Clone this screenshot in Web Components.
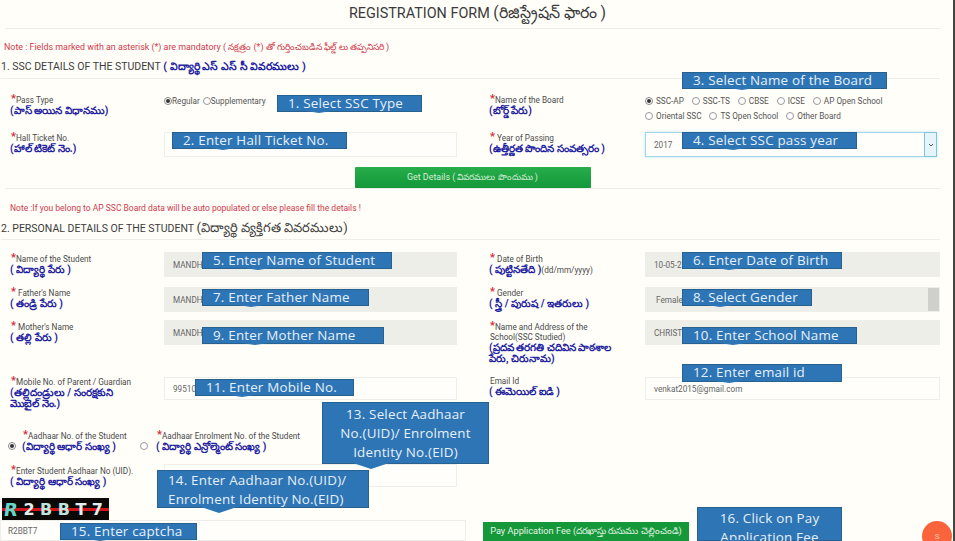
<!DOCTYPE html>
<html>
<head>
<meta charset="utf-8">
<title>Registration Form</title>
<style>
  html, body { margin: 0; padding: 0; height: 541px; overflow: hidden; background: #fffef9; }
  body { font-family: "Roboto", "Liberation Sans", sans-serif; }
</style>
</head>
<body>
<reg-page>
  <form-title>REGISTRATION FORM <span>(రిజిస్ట్రేషన్ ఫారం )</span></form-title>
  <red-note style="--top:11px;--fs:8.9px">Note : Fields marked with an asterisk (*) are mandatory <span>( నక్షత్రం (*) తో గుర్తించబడిన ఫీల్డ్ లు తప్పనిసరి )</span></red-note>
  <section-head style="--top:5px;--fs:10.5px;--tfs:10.8px">1. SSC DETAILS OF THE STUDENT <b>( విద్యార్థి ఎస్ ఎస్ సీ వివరములు )</b></section-head>

  <form-row style="--h:40px;--pt:13px;--lt:3px">
    <form-label req en="Pass Type" te="(పాస్ అయిన విధానము)"></form-label>
    <radio-group style="--gap:3px;--mt:4px">
      <radio-opt checked>Regular</radio-opt><radio-opt>Supplementary</radio-opt>
    </radio-group>
    <form-label req en="Name of the Board" te="(బోర్డ్ పేరు)"></form-label>
    <radio-group style="--gap:8px;--mt:4px;--in:3px">
      <radio-opt checked>SSC-AP</radio-opt><radio-opt>SSC-TS</radio-opt><radio-opt>CBSE</radio-opt><radio-opt>ICSE</radio-opt><radio-opt>AP Open School</radio-opt>
      <radio-opt>Oriental SSC</radio-opt><radio-opt>TS Open School</radio-opt><radio-opt>Other Board</radio-opt>
    </radio-group>
  </form-row>

  <form-row style="--h:34px;--pt:0px;--lt:1px">
    <form-label req en="Hall Ticket No." te="(హాల్ టికెట్ నెం.)"></form-label>
    <text-box></text-box>
    <form-label req en="&nbsp;Year of Passing" te="(ఉత్తీర్ణత పొందిన సంవత్సరం )"></form-label>
    <text-box focus arrow value="2017" style="margin-right:3px"></text-box>
  </form-row>

  <action-row>
    <green-btn style="--w:236px">Get Details ( వివరములు పొందుము )</green-btn>
  </action-row>

  <red-note style="--top:12px;--left:10px;--fs:8.5px">Note :If you belong to AP SSC Board data will be auto populated or else please fill the details !</red-note>
  <section-head style="--top:5px;--fs:10.5px;--tfs:13px">2. PERSONAL DETAILS OF THE STUDENT <b class="plain">(విద్యార్థి వ్యక్తిగత వివరములు)</b></section-head>

  <form-row style="--h:35px;--pt:12px;--lt:2px">
    <form-label req en="Name of the Student" te="( విద్యార్థి పేరు )"></form-label>
    <text-box grey value="MANDH"></text-box>
    <form-label req en="&nbsp;Date of Birth" te="( పుట్టినతేది )<em>(dd/mm/yyyy)</em>"></form-label>
    <text-box grey value="10-05-2"></text-box>
  </form-row>
  <form-row style="--h:33px;--pt:0px;--lt:1px">
    <form-label req en="&nbsp;Father's Name" te="( తండ్రి పేరు )"></form-label>
    <text-box grey value="MANDH"></text-box>
    <form-label req en="&nbsp;Gender" te="( స్త్రీ / పురుష / ఇతరులు )"></form-label>
    <text-box grey disabled-arrow value="&nbsp;Female"></text-box>
  </form-row>
  <form-row style="--h:57px;--pt:0px;--lt:2px">
    <form-label req en="&nbsp;Mother's Name" te="( తల్లి పేరు )"></form-label>
    <text-box grey value="MANDH"></text-box>
    <form-label req en="Name and Address of the<br>School(SSC Studied)" te="(ప్రదవ తరగతి చదివిన పాఠశాల<br>పేరు, చిరునామ)"></form-label>
    <text-box grey value="CHRIST"></text-box>
  </form-row>
  <form-row style="--h:50px;--pt:0px;--lt:0px;--bh:23px">
    <form-label req en="Mobile No. of Parent / Guardian" te="(తల్లిదండ్రులు / సంరక్షకుని<br>మొబైల్ నెం.)"></form-label>
    <text-box value="99510"></text-box>
    <form-label en="Email Id" te="( ఈమెయిల్ ఐడి )" style="margin-top:-1px"></form-label>
    <text-box value="venkat2015@gmail.com"></text-box>
  </form-row>

  <aadhaar-row>
    <radio-opt checked></radio-opt>
    <form-label req en="Aadhaar No. of the Student" te="(విద్యార్థి ఆధార్ సంఖ్య )"></form-label>
    <radio-opt></radio-opt>
    <form-label req en="Aadhaar Enrolment No. of the Student" te="( విద్యార్థి ఎన్రోల్మెంట్ సంఖ్య )"></form-label>
  </aadhaar-row>

  <form-row style="--h:34px;--pt:0px;--lt:2px;--bh:23px">
    <form-label req en="Enter Student Aadhaar No (UID)." te="( విద్యార్థి ఆధార్ సంఖ్య )"></form-label>
    <text-box></text-box>
  </form-row>

  <captcha-row value="R2BBT7" pay="Pay Application Fee (దరఖాస్తు రుసుము చెల్లించండి)"></captcha-row>

  <tag-layer>
    <call-out x="277" y="95" w="145" h="17">1. Select SSC Type</call-out>
    <call-out x="172" y="132" w="175" h="17">2. Enter Hall Ticket No.</call-out>
    <call-out x="682" y="72" w="205" h="17">3. Select Name of the Board</call-out>
    <call-out x="682" y="132" w="175" h="17">4. Select SSC pass year</call-out>
    <call-out x="202" y="252" w="190" h="17">5. Enter Name of Student</call-out>
    <call-out x="682" y="252" w="160" h="17">6. Enter Date of Birth</call-out>
    <call-out x="202" y="289" w="167" h="17">7. Enter Father Name</call-out>
    <call-out x="682" y="289" w="130" h="17">8. Select Gender</call-out>
    <call-out x="202" y="327" w="182" h="17">9. Enter Mother Name</call-out>
    <call-out x="682" y="327" w="175" h="17">10. Enter School Name</call-out>
    <call-out x="195" y="379" w="159" h="17">11. Enter Mobile No.</call-out>
    <call-out x="682" y="364" w="160" h="18">12. Enter email id</call-out>
    <call-out x="322" y="402" w="167" h="62" big center style="--pad:2px">13. Select Aadhaar<br>No.(UID)/ Enrolment<br>Identity No.(EID)</call-out>
    <call-out x="157" y="470" w="212" h="38" big>14. Enter Aadhaar No.(UID)/<br>Enrolment Identity No.(EID)</call-out>
    <call-out x="60" y="523" w="137" h="17">15. Enter captcha</call-out>
    <call-out x="697" y="507" w="145" h="34" big center style="--pad:1px">16. Click on Pay<br>Application Fee</call-out>
    <fab-dot>S</fab-dot>
  </tag-layer>
</reg-page>

<script>
const FONT = `"Roboto", "Liberation Sans", "Noto Sans", sans-serif`;

class RegPage extends HTMLElement {
  constructor() {
    super();
    this.attachShadow({ mode: 'open' }).innerHTML = `
      <style>
        :host { display: flex; flex-direction: column; position: relative; width: 955px; height: 541px;
          overflow: hidden; background: #fffef9; font-family: ${FONT}; box-sizing: border-box;
          border-right: 2px solid #444; }
      </style>
      <slot></slot>`;
  }
}

class FormTitle extends HTMLElement {
  constructor() {
    super();
    this.attachShadow({ mode: 'open' }).innerHTML = `
      <style>
        :host { display: block; height: 28px; line-height: 26px; margin: 0 13px 0 5px; padding-left: 10px; text-align: center;
          font-size: 14.4px; color: #3a3a3a; border-bottom: 1px solid #eeeee9; white-space: nowrap; }
        ::slotted(span) { font-size: 15.8px; }
      </style>
      <slot></slot>`;
  }
}

class RedNote extends HTMLElement {
  constructor() {
    super();
    this.attachShadow({ mode: 'open' }).innerHTML = `
      <style>
        :host { display: block; margin-top: var(--top, 10px); padding-left: var(--left, 4px); height: 14px; line-height: 14px;
          font-size: var(--fs, 8.6px); color: #cf3a4c; white-space: nowrap; }
        ::slotted(span) { font-size: 9px; }
      </style>
      <slot></slot>`;
  }
}

class SectionHead extends HTMLElement {
  constructor() {
    super();
    this.attachShadow({ mode: 'open' }).innerHTML = `
      <style>
        :host { display: block; margin: var(--top, 4px) 13px 0 1px; height: 15px; padding-bottom: 4px; line-height: 15px;
          font-size: var(--fs, 10.6px); color: #3c3c3c; border-bottom: 1px solid #eeeee9; white-space: nowrap; }
        ::slotted(b) { color: #1e22a0; font-weight: 700; font-size: var(--tfs, 11px); }
        ::slotted(b.plain) { color: #3c3c3c; font-weight: 400; }
      </style>
      <slot></slot>`;
  }
}

class FormRow extends HTMLElement {
  constructor() {
    super();
    this.attachShadow({ mode: 'open' }).innerHTML = `
      <style>
        :host { display: grid; grid-template-columns: 153px 293px 188px 295px; align-items: start;
          height: var(--h, 34px); padding: var(--pt, 0) 0 0 11px; }
        ::slotted(form-label:nth-child(3)) { padding-left: 33px; }
      </style>
      <slot></slot>`;
  }
}

class FormLabel extends HTMLElement {
  constructor() {
    super();
    const te = this.getAttribute('te') || '';
    const req = this.hasAttribute('req') ? '<i>*</i>' : '';
    this.attachShadow({ mode: 'open' }).innerHTML = `
      <style>
        :host { display: block; font-size: 8.2px; line-height: 10px; color: #4a4a4a; box-sizing: border-box;
          padding-top: var(--lt, 0px); }
        i { color: #d32a3a; font-style: normal; font-weight: 700; font-size: 11px; line-height: 5px; vertical-align: 1px; }
        b { display: block; color: #1e22a0; font-size: 10.3px; line-height: 11px; font-weight: 700; margin-left: -1px; white-space: nowrap; }
        em { font-style: normal; font-weight: 400; color: #4a4a4a; font-size: 8.2px; }
      </style>
      ${req}<span>${this.getAttribute('en')}</span><b>${te}</b>`;
  }
}

class TextBox extends HTMLElement {
  constructor() {
    super();
    const value = this.getAttribute('value') || '';
    const focus = this.hasAttribute('focus');
    const grey = this.hasAttribute('grey');
    const arrow = this.hasAttribute('arrow');
    const off = this.hasAttribute('disabled-arrow');
    this.attachShadow({ mode: 'open' }).innerHTML = `
      <style>
        :host { display: flex; align-items: center; height: var(--bh, 25px); box-sizing: border-box; padding-left: 8px;
          font-size: 8.2px; color: #666;
          background: ${grey ? '#eeeee9' : '#fffefb'};
          border: 1px solid ${focus ? '#9fd6ea' : '#efefea'};
          ${focus ? 'box-shadow: 0 0 3px #bfe6f3;' : ''} }
        span { flex: 1; }
        .arrow { width: 11px; align-self: stretch; display: flex; align-items: center; justify-content: center;
          border: 1px solid #7fc4dc; margin: -1px; background: #e4f4f9; }
        .off { width: 11px; align-self: stretch; background: #cfcfcb; }
      </style>
      <span>${value}</span>
      ${arrow ? `<div class="arrow"><svg width="6" height="4" viewBox="0 0 6 4"><path d="M1 1l2 2 2-2" fill="none" stroke="#555" stroke-width="1"/></svg></div>` : ''}
      ${off ? '<div class="off"></div>' : ''}`;
  }
}

class RadioGroup extends HTMLElement {
  constructor() {
    super();
    this.attachShadow({ mode: 'open' }).innerHTML = `
      <style>
        :host { display: flex; flex-wrap: wrap; align-items: center; gap: 5px var(--gap, 7px); font-size: 8.2px; color: #555;
          max-width: 245px; margin-top: var(--mt, 0); }
      </style>
      <slot></slot>`;
  }
}

class RadioOpt extends HTMLElement {
  constructor() {
    super();
    const on = this.hasAttribute('checked');
    this.attachShadow({ mode: 'open' }).innerHTML = `
      <style>
        :host { display: inline-flex; align-items: center; gap: var(--in, 0px); white-space: nowrap; line-height: 10px; }
        .c { width: 6px; height: 6px; border-radius: 50%; border: 1px solid #999; background: #fff; position: relative; flex: none; }
        .c.on { border-color: #888; }
        .c.on::after { content: ""; position: absolute; inset: 1px; border-radius: 50%; background: #333; }
      </style>
      <div class="c ${on ? 'on' : ''}"></div><slot></slot>`;
  }
}

class ActionRow extends HTMLElement {
  constructor() {
    super();
    this.attachShadow({ mode: 'open' }).innerHTML = `
      <style>
        :host { display: flex; justify-content: center; height: 21px; margin: 1px 13px 0 5px; border-bottom: 1px solid #eeeee9; }
      </style>
      <slot></slot>`;
  }
}

class GreenBtn extends HTMLElement {
  constructor() {
    super();
    this.attachShadow({ mode: 'open' }).innerHTML = `
      <style>
        :host { display: flex; align-items: center; justify-content: center; width: var(--w, 200px); box-sizing: border-box;
          background: linear-gradient(#27ad4a, #14983a); color: #d3eed8; font-size: 8.9px;
          border-radius: 1px; white-space: nowrap; }
      </style>
      <slot></slot>`;
  }
}

class AadhaarRow extends HTMLElement {
  constructor() {
    super();
    this.attachShadow({ mode: 'open' }).innerHTML = `
      <style>
        :host { display: grid; grid-template-columns: 15px 117px 17px auto; align-items: start;
          height: 33px; padding: 4px 0 0 8px; }
        ::slotted(form-label) { white-space: nowrap; }
        ::slotted(radio-opt) { margin-top: 11px; }
      </style>
      <slot></slot>`;
  }
}

class CaptchaRow extends HTMLElement {
  constructor() {
    super();
    this.attachShadow({ mode: 'open' }).innerHTML = `
      <style>
        :host { display: block; }
        .img { display: flex; align-items: center; justify-content: space-between; box-sizing: border-box;
          width: 107px; height: 22px; margin-left: 2px; padding: 0 6px 0 2px; position: relative;
          background: #0c0806; font: 700 16px "DejaVu Sans", sans-serif; color: #e4eeec; }
        .img::before { content: ""; position: absolute; left: 0; right: 0; top: 10px; height: 3px; background: #d0161c; }
        .img span { position: relative; }
        .img .r { color: #63d8c8; font-size: 18px; transform: skewX(-8deg); }
        .img .t { color: #bfe3df; }
        .row { display: flex; align-items: flex-start; }
        .in { width: 466px; height: 21px; box-sizing: border-box; padding: 0 7px; display: flex; align-items: center;
          font-size: 8.2px; color: #666; background: #fffefb; border: 1px solid #efefea; }
        .pay { width: 206px; height: 19px; margin: 2px 0 0 17px; display: flex; align-items: center; justify-content: center;
          background: #14983a; color: #e4f5e6; font-size: 9.2px; white-space: nowrap; }
      </style>
      <div class="img"><span class="r">R</span><span>2</span><span class="t">B</span><span class="t">B</span><span>T</span><span>7</span></div>
      <div class="row">
        <div class="in">${this.getAttribute('value')}</div>
        <div class="pay">${this.getAttribute('pay')}</div>
      </div>`;
  }
}

class TagLayer extends HTMLElement {
  constructor() {
    super();
    this.attachShadow({ mode: 'open' }).innerHTML = `
      <style>:host { display: block; position: absolute; inset: 0; overflow: hidden; }</style>
      <slot></slot>`;
  }
}

class CallOut extends HTMLElement {
  constructor() {
    super();
    const a = n => this.getAttribute(n);
    const big = this.hasAttribute('big');
    const center = this.hasAttribute('center');
    this.attachShadow({ mode: 'open' }).innerHTML = `
      <style>
        :host { display: block; position: absolute; left: ${a('x')}px; top: ${a('y')}px; width: ${a('w')}px; height: ${a('h')}px;
          box-sizing: border-box; padding: var(--pad, 0) ${center ? '0' : '10px'}; background: #2e75b6; border: 1px solid #27618f;
          color: #e6f0f8; font-family: "Open Sans", sans-serif; font-size: 13.4px; letter-spacing: .2px;
          line-height: ${big ? 19 : 15}px; text-align: ${center ? 'center' : 'left'}; white-space: nowrap; }
        svg { position: absolute; left: 29%; top: 100%; transform: translateX(-50%); }
      </style>
      <slot></slot>
      <svg width="${big ? 36 : 26}" height="${big ? 6 : 2}" viewBox="0 0 36 6" preserveAspectRatio="none"><path d="M0 0H36L18 6Z" fill="#2e75b6"/></svg>`;
  }
}

class FabDot extends HTMLElement {
  constructor() {
    super();
    this.attachShadow({ mode: 'open' }).innerHTML = `
      <style>
        :host { display: flex; align-items: center; justify-content: center; position: absolute; left: 922px; top: 521px;
          width: 30px; height: 30px; border-radius: 50%; background: #f9643c; color: #ffc9b0; font-size: 8px; }
      </style>
      <slot></slot>`;
  }
}

customElements.define('reg-page', RegPage);
customElements.define('form-title', FormTitle);
customElements.define('red-note', RedNote);
customElements.define('section-head', SectionHead);
customElements.define('form-row', FormRow);
customElements.define('form-label', FormLabel);
customElements.define('text-box', TextBox);
customElements.define('radio-group', RadioGroup);
customElements.define('radio-opt', RadioOpt);
customElements.define('action-row', ActionRow);
customElements.define('green-btn', GreenBtn);
customElements.define('aadhaar-row', AadhaarRow);
customElements.define('captcha-row', CaptchaRow);
customElements.define('tag-layer', TagLayer);
customElements.define('call-out', CallOut);
customElements.define('fab-dot', FabDot);
</script>
</body>
</html>
